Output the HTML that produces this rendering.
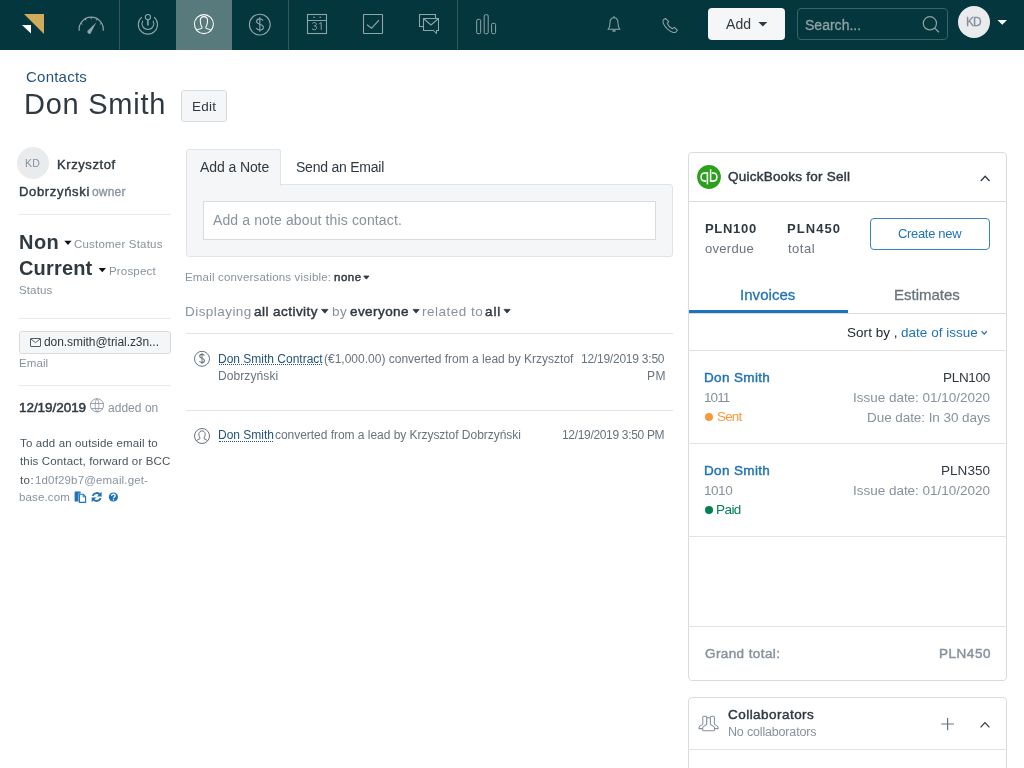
<!DOCTYPE html>
<html><head><meta charset="utf-8"><style>
html,body{margin:0;padding:0;width:1024px;height:768px;overflow:hidden;background:#fff;}
body{position:relative;font-family:"Liberation Sans",sans-serif;}
.t{position:absolute;white-space:pre;line-height:1;will-change:transform;}
.r{position:absolute;box-sizing:border-box;}
svg{position:absolute;overflow:visible;}
</style></head><body>
<div class="r" style="left:0px;top:0px;width:1024px;height:50px;background:#03363d;"></div>
<div class="r" style="left:176px;top:0px;width:56px;height:50px;background:#587a7c;"></div>
<div class="r" style="left:119px;top:0px;width:1px;height:50px;background:#33595e;"></div>
<div class="r" style="left:288px;top:0px;width:1px;height:50px;background:#33595e;"></div>
<div class="r" style="left:457px;top:0px;width:1px;height:50px;background:#33595e;"></div>
<svg style="left:0;top:0" width="1024" height="50"><polygon points="24,14 44,14 44,34" fill="#d1ab5c"/><polygon points="22,25 31,25 31,33.5" fill="#fff"/><path d="M79.19,30.77 A12.1,12.1 0 1 1 103.21,30.77" fill="none" stroke="#8fa5a8" stroke-width="1.2"/><line x1="80.72" y1="23.25" x2="82.45" y2="24.25" stroke="#8fa5a8" stroke-width="1"/><line x1="85.15" y1="18.82" x2="86.15" y2="20.55" stroke="#8fa5a8" stroke-width="1"/><line x1="91.20" y1="17.20" x2="91.20" y2="19.20" stroke="#8fa5a8" stroke-width="1"/><line x1="97.25" y1="18.82" x2="96.25" y2="20.55" stroke="#8fa5a8" stroke-width="1"/><line x1="101.68" y1="23.25" x2="99.95" y2="24.25" stroke="#8fa5a8" stroke-width="1"/><path d="M87.3,31 L96.4,22.2 L90.6,33.6 C89.6,34.4 87.2,33.6 87.3,31 Z" fill="#8fa5a8"/><path d="M154.07,17.15 A9.6,9.6 0 1 1 141.73,17.15" fill="none" stroke="#8fa5a8" stroke-width="1.1"/><path d="M153.01,20.65 A5.9,5.9 0 1 1 142.79,20.65" fill="none" stroke="#8fa5a8" stroke-width="1.1"/><circle cx="147.9" cy="17.1" r="2.6" fill="none" stroke="#8fa5a8" stroke-width="1.1"/><line x1="147.9" y1="19.8" x2="147.9" y2="25.5" stroke="#8fa5a8" stroke-width="1.6"/><circle cx="203.9" cy="24.1" r="9.5" fill="none" stroke="#fff" stroke-width="1.05"/><path d="M196.6,30.4 C197.6,29.2 199.6,28.8 201.5,28.4 C202,28.1 202.1,27.4 201.9,26.8 C201.2,26 200.6,24.5 200.4,22.5 C200.2,20.8 200.2,19.5 200.6,18.5 C201.1,17.2 202.4,16.6 203.9,16.6 C205.4,16.6 206.7,17.2 207.2,18.5 C207.6,19.5 207.6,20.8 207.4,22.5 C207.2,24.5 206.6,26 205.9,26.8 C205.7,27.4 205.8,28.1 206.3,28.4 C208.2,28.8 210.2,29.2 211.2,30.4" fill="none" stroke="#fff" stroke-width="1.05"/><circle cx="259.8" cy="24.6" r="10.4" fill="none" stroke="#8fa5a8" stroke-width="1.1"/><path d="M263,20.6 C262.3,19.4 261.2,18.9 259.8,18.9 C257.8,18.9 256.6,20 256.6,21.5 C256.6,24.9 263.4,23.6 263.4,27.3 C263.4,28.9 261.9,30 259.8,30 C258.1,30 256.9,29.3 256.2,28" fill="none" stroke="#8fa5a8" stroke-width="1.1"/><line x1="259.8" y1="17.2" x2="259.8" y2="31.8" stroke="#8fa5a8" stroke-width="1.1"/><rect x="307.5" y="14.5" width="19" height="19" fill="none" stroke="#8fa5a8" stroke-width="1.1"/><line x1="307.5" y1="20.5" x2="326.5" y2="20.5" stroke="#8fa5a8" stroke-width="1"/><circle cx="314" cy="17.2" r="0.8" fill="#8fa5a8"/><circle cx="320.2" cy="17.2" r="0.8" fill="#8fa5a8"/><path d="M312.3,23.6 C312.8,22.8 313.5,22.5 314.4,22.5 C315.6,22.5 316.4,23.2 316.4,24.3 C316.4,25.3 315.6,25.9 314.3,25.9 C315.8,25.9 316.6,26.6 316.6,27.8 C316.6,29 315.6,29.8 314.3,29.8 C313.3,29.8 312.5,29.4 312,28.6" fill="none" stroke="#8fa5a8" stroke-width="0.95"/><path d="M319.2,23.8 L321.2,22.5 L321.2,29.8" fill="none" stroke="#8fa5a8" stroke-width="0.95"/><rect x="363.5" y="14.5" width="19" height="19" rx="0.5" fill="none" stroke="#8fa5a8" stroke-width="1.1"/><path d="M367,24.8 L371.6,28.2 L379,20.2" fill="none" stroke="#8fa5a8" stroke-width="1.15"/><path d="M423,26.5 L419.5,26.5 L419.5,14.5 L435.5,14.5 L435.5,18.4" fill="none" stroke="#8fa5a8" stroke-width="1.05"/><path d="M423.5,18.5 L438.5,18.5 L438.5,30.5 L436.5,30.5 L436.5,33.5 L433.5,30.5 L423.5,30.5 Z" fill="none" stroke="#8fa5a8" stroke-width="1.05" stroke-linejoin="round"/><path d="M423.5,18.5 L431,25 L438.5,18.5" fill="none" stroke="#8fa5a8" stroke-width="1.05"/><rect x="476.7" y="19.4" width="4" height="14.3" rx="1.3" fill="none" stroke="#8fa5a8" stroke-width="1"/><rect x="484.2" y="14.7" width="4" height="19" rx="1.3" fill="none" stroke="#8fa5a8" stroke-width="1"/><rect x="491.6" y="23.3" width="4" height="10.4" rx="1.3" fill="none" stroke="#8fa5a8" stroke-width="1"/><path d="M608,29.3 C609.7,27.7 610,26.4 610,23.2 C610,19.9 611.7,17.8 614,17.8 C616.3,17.8 618,19.9 618,23.2 C618,26.4 618.3,27.7 620,29.3 Z" fill="none" stroke="#8fa5a8" stroke-width="1.05" stroke-linejoin="round"/><line x1="614" y1="16" x2="614" y2="17.8" stroke="#8fa5a8" stroke-width="1.1"/><path d="M612.4,30.9 L615.6,30.9" stroke="#8fa5a8" stroke-width="1.5"/><path d="M665.4,18.3 L663.2,19.9 C662.5,22.2 664,25.6 667.3,28.9 C670.5,31.9 673.7,32.9 675.7,32.2 L677.3,30.1 L674.3,27.4 L672.3,28.7 C670.5,27.8 668.2,25.6 667.3,23.5 L668.7,21.6 Z" fill="none" stroke="#8fa5a8" stroke-width="1.05" stroke-linejoin="round"/></svg>
<div class="r" style="left:708px;top:8px;width:77px;height:32px;background:#f5f6f7;border-radius:4px;"></div>
<div class="t" style="left:725.70px;top:17.35px;font-size:14px;color:#2f3941;letter-spacing:0.045px;">Add</div>
<svg style="left:0;top:0" width="800" height="50"><polygon points="758.4,22 767.3,22 762.85,26.4" fill="#2f3941"/></svg>
<div class="r" style="left:797px;top:8px;width:151px;height:32px;border:1px solid #3b6469;border-radius:4px;"></div>
<div class="t" style="left:804.87px;top:17.70px;font-size:14px;color:#8fa2a5;-webkit-text-stroke:0.3px #8fa2a5;letter-spacing:0.011px;">Search...</div>
<svg style="left:0;top:0" width="960" height="50"><circle cx="929.9" cy="23.3" r="6.6" fill="none" stroke="#8fa2a5" stroke-width="1.2"/><line x1="934.6" y1="28" x2="939" y2="32.2" stroke="#8fa2a5" stroke-width="1.2"/></svg>
<div class="r" style="left:958px;top:6px;width:32px;height:32px;background:#e9ebed;border-radius:50%;"></div>
<div class="t" style="left:965.64px;top:16.44px;font-size:12px;color:#87929d;-webkit-text-stroke:0.3px #87929d;letter-spacing:-0.920px;">KD</div>
<svg style="left:0;top:0" width="1024" height="50"><polygon points="997.5,20 1007,20 1002.25,24.7" fill="#fff"/></svg>
<div class="t" style="left:25.75px;top:68.70px;font-size:15px;color:#24527f;letter-spacing:0.229px;">Contacts</div>
<div class="t" style="left:24.18px;top:90.35px;font-size:29px;color:#2f3941;letter-spacing:0.740px;">Don Smith</div>
<div class="r" style="left:181px;top:90px;width:46px;height:32px;background:#f5f6f7;border:1px solid #d8dcde;border-radius:3px;"></div>
<div class="t" style="left:191.72px;top:100.27px;font-size:13.5px;color:#2f3941;letter-spacing:0.209px;">Edit</div>
<div class="r" style="left:17px;top:147px;width:32px;height:32px;background:#e9ebed;border-radius:50%;"></div>
<div class="t" style="left:25.46px;top:158.31px;font-size:10.5px;color:#87929d;letter-spacing:0.370px;">KD</div>
<div class="t" style="left:56.76px;top:158.30px;font-size:13px;color:#2f3941;-webkit-text-stroke:0.4px #2f3941;letter-spacing:0.581px;">Krzysztof</div>
<div class="t" style="left:18.56px;top:184.90px;font-size:13px;color:#2f3941;-webkit-text-stroke:0.4px #2f3941;letter-spacing:0.667px;">Dobrzyński</div>
<div class="t" style="left:92.02px;top:186.14px;font-size:12px;color:#87929d;-webkit-text-stroke:0.3px #87929d;letter-spacing:0.180px;">owner</div>
<div class="r" style="left:19px;top:214px;width:152px;height:1px;background:#e9ebed;"></div>
<div class="t" style="left:18.70px;top:231.57px;font-size:20px;color:#2f3941;font-weight:700;letter-spacing:0.450px;">Non</div>
<svg style="left:0;top:0" width="200" height="300"><polygon points="64.3,240.8 71.6,240.8 67.95,245" fill="#111"/><polygon points="98.6,268.1 106,268.1 102.3,272.3" fill="#111"/></svg>
<div class="t" style="left:74.42px;top:239.17px;font-size:11.5px;color:#87929d;letter-spacing:0.197px;">Customer Status</div>
<div class="t" style="left:19.20px;top:258.17px;font-size:20px;color:#2f3941;font-weight:700;letter-spacing:0.167px;">Current</div>
<div class="t" style="left:109.48px;top:265.57px;font-size:11.5px;color:#87929d;letter-spacing:0.173px;">Prospect</div>
<div class="t" style="left:19.48px;top:284.97px;font-size:11.5px;color:#87929d;letter-spacing:0.123px;">Status</div>
<div class="r" style="left:19px;top:318px;width:152px;height:1px;background:#e9ebed;"></div>
<div class="r" style="left:19px;top:331px;width:152px;height:23px;background:#f5f6f7;border:1px solid #d8dcde;border-radius:3px;"></div>
<svg style="left:0;top:0" width="200" height="400"><rect x="30.5" y="338.5" width="10" height="8" rx="0.5" fill="none" stroke="#49545c" stroke-width="0.95"/><path d="M30.8,339 L35.5,342.6 L40.2,339" fill="none" stroke="#49545c" stroke-width="0.9"/></svg>
<div class="t" style="left:43.52px;top:335.74px;font-size:12px;color:#2f3941;letter-spacing:-0.060px;">don.smith@trial.z3n...</div>
<div class="t" style="left:19.08px;top:358.17px;font-size:11.5px;color:#87929d;letter-spacing:0.079px;">Email</div>
<div class="r" style="left:19px;top:385px;width:152px;height:1px;background:#e9ebed;"></div>
<div class="t" style="left:18.99px;top:401.17px;font-size:13.5px;color:#2f3941;-webkit-text-stroke:0.5px #2f3941;letter-spacing:-0.050px;">12/19/2019</div>
<svg style="left:0;top:0" width="200" height="420"><circle cx="97" cy="405.3" r="6.6" fill="none" stroke="#87929d" stroke-width="0.9"/><path d="M90.6,403.5 L103.4,403.5 M91.3,408.5 L102.7,408.5 M97,398.7 C94.5,401 94.5,409.5 97,411.9 M97,398.7 C99.5,401 99.5,409.5 97,411.9" fill="none" stroke="#87929d" stroke-width="0.8"/></svg>
<div class="t" style="left:107.52px;top:402.14px;font-size:12px;color:#87929d;letter-spacing:0.031px;">added on</div>
<div class="t" style="left:19.77px;top:438.37px;font-size:11.5px;color:#49545c;letter-spacing:0.137px;">To add an outside email to</div>
<div class="t" style="left:19.83px;top:456.27px;font-size:11.5px;color:#49545c;letter-spacing:0.146px;">this Contact, forward or BCC</div>
<div class="t" style="left:19.83px;top:474.57px;font-size:11.5px;color:#49545c;letter-spacing:0.421px;">to:</div>
<div class="t" style="left:35.34px;top:474.57px;font-size:11.5px;color:#87929d;letter-spacing:0.156px;">1d0f29b7@email.get-</div>
<div class="t" style="left:19.25px;top:491.97px;font-size:11.5px;color:#87929d;letter-spacing:0.126px;">base.com</div>
<svg style="left:0;top:0" width="200" height="520">
<path d="M74.6,491.6 L80.6,491.6 L80.6,493.5 L78.5,493.5 L78.5,501.5 L74.6,501.5 Z" fill="#1f73b7"/>
<path d="M79.4,494.3 L83.3,494.3 L85.6,496.6 L85.6,502.4 L79.4,502.4 Z" fill="#fff" stroke="#1f73b7" stroke-width="1.1" stroke-linejoin="round"/>
<path d="M83.1,494.3 L83.1,496.9 L85.6,496.9" fill="none" stroke="#1f73b7" stroke-width="0.9"/>
<path d="M100.3,494.9 A4.4,4.4 0 0 0 92.6,495.8" fill="none" stroke="#1f73b7" stroke-width="1.8"/><polygon points="101.6,491.8 101.6,496.6 97,496.6" fill="#1f73b7"/>
<path d="M93,499.1 A4.4,4.4 0 0 0 100.7,498.2" fill="none" stroke="#1f73b7" stroke-width="1.8"/><polygon points="91.7,502.2 91.7,497.4 96.3,497.4" fill="#1f73b7"/>
<circle cx="113.4" cy="497" r="4.6" fill="#1f73b7"/>
<path d="M111.6,495.9 C111.6,494.8 112.4,494.2 113.4,494.2 C114.5,494.2 115.2,494.8 115.2,495.7 C115.2,496.8 113.8,496.9 113.5,497.9 L113.5,498.3" fill="none" stroke="#fff" stroke-width="1.3"/><circle cx="113.5" cy="499.8" r="0.75" fill="#fff"/>
</svg>
<div class="r" style="left:186px;top:184px;width:487px;height:73px;background:#f5f6f7;border:1px solid #e1e4e6;border-radius:0 3px 3px 3px;"></div>
<div class="r" style="left:186px;top:149px;width:95px;height:37px;background:#f5f6f7;border:1px solid #e1e4e6;border-bottom:none;border-radius:3px 3px 0 0;"></div>
<div class="t" style="left:199.90px;top:159.65px;font-size:14px;color:#2f3941;letter-spacing:-0.097px;">Add a Note</div>
<div class="t" style="left:296.07px;top:159.65px;font-size:14px;color:#2f3941;letter-spacing:-0.230px;">Send an Email</div>
<div class="r" style="left:203px;top:201px;width:453px;height:39px;background:#fff;border:1px solid #d8dcde;"></div>
<div class="t" style="left:212.80px;top:213.25px;font-size:14px;color:#87929d;letter-spacing:0.122px;">Add a note about this contact.</div>
<div class="t" style="left:185.38px;top:271.97px;font-size:11.5px;color:#87929d;letter-spacing:0.175px;">Email conversations visible:</div>
<div class="t" style="left:333.65px;top:271.97px;font-size:11.5px;color:#2f3941;-webkit-text-stroke:0.45px #2f3941;letter-spacing:0.526px;">none</div>
<div class="t" style="left:184.92px;top:304.77px;font-size:13.5px;color:#87929d;letter-spacing:0.447px;">Displaying</div>
<div class="t" style="left:253.56px;top:304.77px;font-size:13.5px;color:#2f3941;-webkit-text-stroke:0.45px #2f3941;letter-spacing:0.456px;">all activity</div>
<div class="t" style="left:331.52px;top:304.77px;font-size:13.5px;color:#87929d;letter-spacing:0.535px;">by</div>
<div class="t" style="left:350.06px;top:304.77px;font-size:13.5px;color:#2f3941;-webkit-text-stroke:0.45px #2f3941;letter-spacing:0.428px;">everyone</div>
<div class="t" style="left:421.82px;top:304.77px;font-size:13.5px;color:#87929d;letter-spacing:0.502px;">related to</div>
<div class="t" style="left:485.26px;top:304.77px;font-size:13.5px;color:#2f3941;-webkit-text-stroke:0.45px #2f3941;letter-spacing:0.909px;">all</div>
<svg style="left:0;top:0" width="700" height="340"><polygon points="363.7,276.0 369.0,276.0 366.35,279.155" fill="#2f3941" stroke="#2f3941" stroke-width="0.8" stroke-linejoin="round"/><polygon points="321.59999999999997,309.40000000000003 328.0,309.40000000000003 324.79999999999995,313.16" fill="#2f3941" stroke="#2f3941" stroke-width="0.8" stroke-linejoin="round"/><polygon points="413.0,309.40000000000003 419.20000000000005,309.40000000000003 416.1,313.05000000000007" fill="#2f3941" stroke="#2f3941" stroke-width="0.8" stroke-linejoin="round"/><polygon points="504.0,309.40000000000003 510.20000000000005,309.40000000000003 507.1,313.05000000000007" fill="#2f3941" stroke="#2f3941" stroke-width="0.8" stroke-linejoin="round"/></svg>
<div class="r" style="left:186px;top:333px;width:487px;height:1px;background:#e1e4e6;"></div>
<svg style="left:0;top:0" width="700" height="460">
<circle cx="202" cy="358.8" r="7.5" fill="none" stroke="#68737d" stroke-width="1"/>
<path d="M204.4,355.6 C204,354.8 203.1,354.4 202,354.4 C200.6,354.4 199.7,355.2 199.7,356.3 C199.7,358.8 204.5,357.8 204.5,360.5 C204.5,361.7 203.4,362.5 202,362.5 C200.8,362.5 199.9,362 199.5,361.1" fill="none" stroke="#68737d" stroke-width="1.1"/><line x1="202" y1="353.2" x2="202" y2="364" stroke="#68737d" stroke-width="1"/>
<circle cx="202" cy="436" r="7.5" fill="none" stroke="#68737d" stroke-width="1"/>
<path d="M196.3,441 C197,439.8 198.6,439.4 199.9,438.8 C200.1,438.1 199.9,437.6 199.5,436.9 C198.9,436 198.7,434.6 198.9,433.4 C199.2,431.8 200.5,430.9 202,430.9 C203.5,430.9 204.8,431.8 205.1,433.4 C205.3,434.6 205.1,436 204.5,436.9 C204.1,437.6 203.9,438.1 204.1,438.8 C205.4,439.4 207,439.8 207.7,441" fill="none" stroke="#68737d" stroke-width="1"/>
</svg>
<div class="t" style="left:217.64px;top:352.84px;font-size:12px;color:#24527f;">Don Smith Contract</div>
<div class="r" style="left:219px;top:364px;width:103px;height:1px;border-top:1px dotted #24527f;"></div>
<div class="t" style="left:323.78px;top:352.84px;font-size:12px;color:#68737d;">(€1,000.00) converted from a lead by Krzysztof</div>
<div class="t" style="left:217.64px;top:370.04px;font-size:12px;color:#68737d;letter-spacing:0.089px;">Dobrzyński</div>
<div class="t" style="right:359.82px;text-align:right;top:352.84px;font-size:12px;color:#68737d;letter-spacing:-0.231px;">12/19/2019 3:50</div>
<div class="t" style="right:358.50px;text-align:right;top:370.04px;font-size:12px;color:#68737d;letter-spacing:0.480px;">PM</div>
<div class="r" style="left:186px;top:410px;width:487px;height:1px;background:#e1e4e6;"></div>
<div class="t" style="left:217.64px;top:429.44px;font-size:12px;color:#24527f;letter-spacing:-0.017px;">Don Smith</div>
<div class="r" style="left:219px;top:441px;width:54px;height:1px;border-top:1px dotted #24527f;"></div>
<div class="t" style="left:275.02px;top:429.44px;font-size:12px;color:#68737d;letter-spacing:-0.035px;">converted from a lead by Krzysztof Dobrzyński</div>
<div class="t" style="right:359.34px;text-align:right;top:429.44px;font-size:12px;color:#68737d;letter-spacing:-0.324px;">12/19/2019 3:50 PM</div>
<div class="r" style="left:688px;top:152px;width:319px;height:529px;border:1px solid #d8dcde;border-radius:4px;"></div>
<svg style="left:0;top:0" width="1024" height="768">
<circle cx="709" cy="177" r="11.9" fill="#2ca01c"/>
<path d="M707.4,172.9 L704.9,172.9 C702.4,172.9 701.1,174.8 701.1,177 C701.1,179.2 702.4,181.1 704.9,181.1 L706.1,181.1" fill="none" stroke="#fff" stroke-width="1.55"/>
<line x1="707.4" y1="172.2" x2="707.4" y2="184.4" stroke="#fff" stroke-width="1.55"/>
<path d="M710.6,181.1 L713.1,181.1 C715.6,181.1 716.9,179.2 716.9,177 C716.9,174.8 715.6,172.9 713.1,172.9 L711.9,172.9" fill="none" stroke="#fff" stroke-width="1.55"/>
<line x1="710.6" y1="169.3" x2="710.6" y2="181.8" stroke="#fff" stroke-width="1.55"/>
<path d="M980.8,181 L985.15,176.2 L989.5,181" fill="none" stroke="#2f3941" stroke-width="1.3"/>
<path d="M981.6,331.3 L984.2,334.1 L986.8,331.3" fill="none" stroke="#1f73b7" stroke-width="1.25"/>
<circle cx="709" cy="417.1" r="4" fill="#f79a3e"/>
<circle cx="709" cy="510" r="4" fill="#038153"/>
</svg>
<div class="t" style="left:728.19px;top:169.87px;font-size:13.5px;color:#2f3941;-webkit-text-stroke:0.45px #2f3941;letter-spacing:0.228px;">QuickBooks for Sell</div>
<div class="r" style="left:688px;top:201px;width:319px;height:1px;background:#d8dcde;"></div>
<div class="t" style="left:704.55px;top:222.20px;font-size:13px;color:#2f3941;font-weight:700;letter-spacing:0.704px;">PLN100</div>
<div class="t" style="left:704.88px;top:241.50px;font-size:13px;color:#68737d;letter-spacing:0.302px;">overdue</div>
<div class="t" style="left:787.15px;top:222.20px;font-size:13px;color:#2f3941;font-weight:700;letter-spacing:1.064px;">PLN450</div>
<div class="t" style="left:787.80px;top:241.50px;font-size:13px;color:#68737d;letter-spacing:0.492px;">total</div>
<div class="r" style="left:870px;top:218px;width:120px;height:32px;border:1px solid #3a82c2;border-radius:4px;"></div>
<div class="t" style="left:897.85px;top:227.10px;font-size:13px;color:#1f73b7;letter-spacing:-0.327px;">Create new</div>
<div class="t" style="left:739.75px;top:286.80px;font-size:15px;color:#1f73b7;-webkit-text-stroke:0.3px #1f73b7;letter-spacing:0.046px;">Invoices</div>
<div class="t" style="left:893.60px;top:286.80px;font-size:15px;color:#68737d;-webkit-text-stroke:0.3px #68737d;">Estimates</div>
<div class="r" style="left:689px;top:310px;width:159px;height:3px;background:#1f73b7;"></div>
<div class="r" style="left:688px;top:313px;width:319px;height:1px;background:#d8dcde;"></div>
<div class="t" style="left:847.09px;top:326.07px;font-size:13.5px;color:#222a30;letter-spacing:0.042px;">Sort by ,</div>
<div class="t" style="left:900.96px;top:326.07px;font-size:13.5px;color:#1f73b7;letter-spacing:0.025px;">date of issue</div>
<div class="r" style="left:688px;top:350px;width:319px;height:1px;background:#e1e4e6;"></div>
<div class="t" style="left:704.32px;top:370.77px;font-size:13.5px;color:#1f73b7;-webkit-text-stroke:0.45px #1f73b7;letter-spacing:0.354px;">Don Smith</div>
<div class="t" style="right:34.35px;text-align:right;top:370.77px;font-size:13.5px;color:#2f3941;letter-spacing:-0.310px;">PLN100</div>
<div class="t" style="left:704.39px;top:390.97px;font-size:13.5px;color:#87929d;letter-spacing:-0.918px;">1011</div>
<div class="t" style="right:34.05px;text-align:right;top:390.87px;font-size:13.5px;color:#87929d;letter-spacing:-0.018px;">Issue date: 01/10/2020</div>
<div class="t" style="left:716.79px;top:410.17px;font-size:13.5px;color:#f79a3e;letter-spacing:-0.822px;">Sent</div>
<div class="t" style="right:34.11px;text-align:right;top:410.77px;font-size:13.5px;color:#87929d;letter-spacing:-0.066px;">Due date: In 30 days</div>
<div class="r" style="left:688px;top:443px;width:319px;height:1px;background:#e1e4e6;"></div>
<div class="t" style="left:704.32px;top:463.77px;font-size:13.5px;color:#1f73b7;-webkit-text-stroke:0.45px #1f73b7;letter-spacing:0.354px;">Don Smith</div>
<div class="t" style="right:33.99px;text-align:right;top:463.77px;font-size:13.5px;color:#2f3941;letter-spacing:0.050px;">PLN350</div>
<div class="t" style="left:704.39px;top:483.67px;font-size:13.5px;color:#87929d;letter-spacing:-0.451px;">1010</div>
<div class="t" style="right:34.05px;text-align:right;top:483.67px;font-size:13.5px;color:#87929d;letter-spacing:-0.018px;">Issue date: 01/10/2020</div>
<div class="t" style="left:716.32px;top:503.17px;font-size:13.5px;color:#038153;letter-spacing:-0.548px;">Paid</div>
<div class="r" style="left:688px;top:536px;width:319px;height:1px;background:#e1e4e6;"></div>
<div class="r" style="left:688px;top:626px;width:319px;height:1px;background:#e1e4e6;"></div>
<div class="t" style="left:704.93px;top:646.97px;font-size:13.5px;color:#87929d;-webkit-text-stroke:0.45px #87929d;letter-spacing:0.402px;">Grand total:</div>
<div class="t" style="right:33.51px;text-align:right;top:646.97px;font-size:13.5px;color:#87929d;-webkit-text-stroke:0.45px #87929d;letter-spacing:0.530px;">PLN450</div>
<div class="r" style="left:688px;top:697px;width:319px;height:100px;border:1px solid #d8dcde;border-radius:4px;"></div>
<svg style="left:0;top:0" width="1024" height="768">
<g transform="translate(692,708)" fill="#fff" stroke="#87929d" stroke-width="1.05" stroke-linejoin="round"><path d="M7,20.6 L7,19.6 Q7.2,18.3 8.6,17.6 L10,16.9 Q10.8,16.4 10.8,15.5 L10.8,9.3 Q10.8,8.3 11.8,8.3 L13.8,8.3 Q14.8,8.3 14.8,9.3 L14.8,20.6 Z"/><path d="M 26.20,20.6 L 26.20,19.6 Q 26.00,18.3 24.60,17.6 L 23.20,16.9 Q 22.40,16.4 22.40,15.5 L 22.40,9.3 Q 22.40,8.3 21.40,8.3 L 19.40,8.3 Q 18.40,8.3 18.40,9.3 L 18.40,20.6 Z"/><path d="M14.8,9.7 L18.4,9.7 L18.4,15.8 Q18.4,16.6 19.2,17 L21.6,18.4 Q22.5,19 22.5,20 L22.5,22 Q22.5,22.7 21.8,22.7 L11.4,22.7 Q10.7,22.7 10.7,22 L10.7,20 Q10.7,19 11.6,18.4 L14,17 Q14.8,16.6 14.8,15.8 Z"/></g>
<path d="M941.3,724 L953.9,724 M947.6,717.9 L947.6,730.2" stroke="#68737d" stroke-width="1.2"/>
<path d="M980.6,727.4 L985,722.7 L989.4,727.4" fill="none" stroke="#2f3941" stroke-width="1.2"/>
</svg>
<div class="t" style="left:728.12px;top:708.47px;font-size:13.5px;color:#2f3941;-webkit-text-stroke:0.45px #2f3941;letter-spacing:0.460px;">Collaborators</div>
<div class="t" style="left:727.80px;top:725.92px;font-size:12.5px;color:#87929d;letter-spacing:-0.171px;">No collaborators</div>
<div class="r" style="left:688px;top:749px;width:319px;height:1px;background:#e1e4e6;"></div>
</body></html>
